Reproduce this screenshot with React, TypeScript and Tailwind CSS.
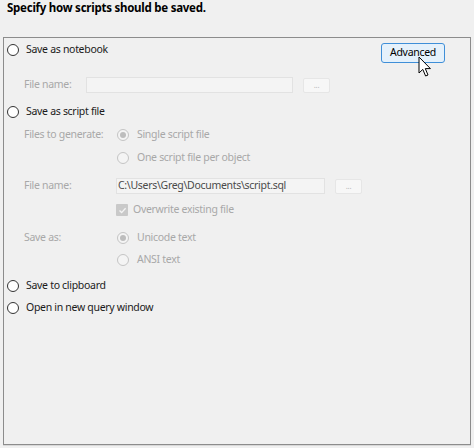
import React from "react";

const font = { fontFamily: '"Noto Sans", "Open Sans", sans-serif' };

function Radio({ checked = false, disabled = false }: { checked?: boolean; disabled?: boolean }) {
  return (
    <span
      className={
        "flex h-[12px] w-[12px] shrink-0 items-center justify-center rounded-full border " +
        (disabled ? "border-[#c4c4c4] bg-[#f4f4f4]" : "border-[#333333] bg-white")
      }
    >
      {checked && <span className={"h-[6px] w-[6px] rounded-full " + (disabled ? "bg-[#bdbdbd]" : "bg-[#333333]")} />}
    </span>
  );
}

function DotsButton() {
  return (
    <div className="ml-[10px] flex h-[15px] w-[27px] items-center justify-center rounded-[2px] border border-[#e6e6e6] bg-[#f7f7f7] text-[8px] leading-none text-[#b8b8b8]">
      ...
    </div>
  );
}

export default function App() {
  return (
    <div
      className="relative h-[448px] w-[474px] overflow-hidden bg-[#f0f0f0] text-[10.5px] tracking-[-0.3px] text-[#1a1a1a]"
      style={font}
    >
      <div className="h-[37px] pl-[7px] pt-[1px]">
        <div className="text-[11.5px] font-bold leading-[14px] tracking-[-0.25px] text-black">
          Specify how scripts should be saved.
        </div>
      </div>

      <div className="ml-[3px] h-[408px] w-[468px] border border-[#8c8c8c] pt-[2px] shadow-[0_1px_0_#d8d8d8]">
        {/* Save as notebook */}
        <div className="flex h-[20px] items-start justify-between">
          <div className="flex h-[20px] items-center pl-[3px]">
            <Radio />
            <span className="ml-[7px]">Save as notebook</span>
          </div>
          <div className="relative mr-[25px] mt-[3px] flex h-[20px] w-[64px] items-center justify-center rounded-[3px] border border-[#3f8fd8] bg-[#e5f1fb] text-[10.5px] text-black">
            Advanced
          </div>
        </div>

        {/* File name 1 */}
        <div className="mt-[17px] flex h-[16px] items-center pl-[20px] text-[#a8a8a8]">
          <span className="w-[62px]">File name:</span>
          <div className="h-[16px] w-[207px] border border-[#e2e2e2] bg-[#f4f4f4]" />
          <DotsButton />
        </div>

        {/* Save as script file */}
        <div className="mt-[9px] flex h-[20px] items-center pl-[3px]">
          <Radio />
          <span className="ml-[7px]">Save as script file</span>
        </div>

        {/* Files to generate */}
        <div className="mt-[3px] flex h-[20px] items-center pl-[20px] text-[#a8a8a8]">
          <span className="w-[93px]">Files to generate:</span>
          <Radio checked disabled />
          <span className="ml-[8px]">Single script file</span>
        </div>
        <div className="mt-[3px] flex h-[20px] items-center pl-[113px] text-[#a8a8a8]">
          <Radio disabled />
          <span className="ml-[8px]">One script file per object</span>
        </div>

        {/* File name 2 */}
        <div className="mt-[10px] flex h-[16px] items-center pl-[20px] text-[#a8a8a8]">
          <span className="w-[92px]">File name:</span>
          <div className="flex h-[16px] w-[209px] items-center border border-[#e2e2e2] bg-[#f4f4f4] pl-[1px] text-[#4a4a4a]">
            C:\Users\Greg\Documents\script.sql
          </div>
          <DotsButton />
        </div>

        {/* Overwrite */}
        <div className="mt-[6px] flex h-[20px] items-center pl-[112px] text-[#a8a8a8]">
          <span className="flex h-[12px] w-[12px] items-center justify-center rounded-[1px] bg-[#c9c9c9]">
            <svg width="9" height="9" viewBox="0 0 9 9">
              <path d="M1.5 4.6 L3.6 6.6 L7.6 2.2" fill="none" stroke="#f4f4f4" strokeWidth="1.4" />
            </svg>
          </span>
          <span className="ml-[5px]">Overwrite existing file</span>
        </div>

        {/* Save as */}
        <div className="mt-[8px] flex h-[20px] items-center pl-[20px] text-[#a8a8a8]">
          <span className="w-[93px]">Save as:</span>
          <Radio checked disabled />
          <span className="ml-[8px]">Unicode text</span>
        </div>
        <div className="mt-[2px] flex h-[20px] items-center pl-[113px] text-[#a8a8a8]">
          <Radio disabled />
          <span className="ml-[8px]">ANSI text</span>
        </div>

        {/* Save to clipboard */}
        <div className="mt-[6px] flex h-[20px] items-center pl-[3px]">
          <Radio />
          <span className="ml-[7px]">Save to clipboard</span>
        </div>
        <div className="mt-[2px] flex h-[20px] items-center pl-[3px]">
          <Radio />
          <span className="ml-[7px]">Open in new query window</span>
        </div>
      </div>

      {/* cursor overlay */}
      <svg className="absolute left-[418px] top-[56px]" width="14" height="22" viewBox="0 0 14 22">
        <path
          d="M1 1 L1 17 L4.8 13.4 L7.6 20 L10 19 L7.3 12.6 L12.4 12.6 Z"
          fill="#ffffff"
          stroke="#000000"
          strokeWidth="1"
          strokeLinejoin="round"
        />
      </svg>
    </div>
  );
}
